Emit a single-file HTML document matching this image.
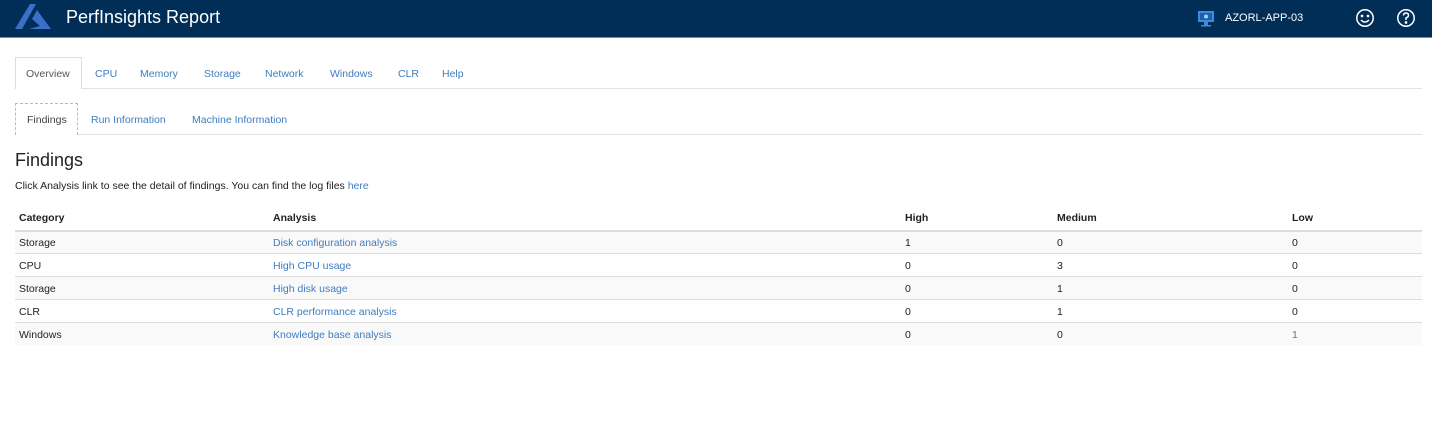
<!DOCTYPE html>
<html><head><style>
*{margin:0;padding:0;box-sizing:border-box}
body{width:1432px;height:432px;background:#fff;font-family:"Liberation Sans",sans-serif;font-size:10.5px;color:#222;position:relative;overflow:hidden}
.hdr{position:absolute;left:0;top:0;width:1432px;height:38px;background:#002e56;border-bottom:1px solid #7a8ea6}
.title{position:absolute;left:66px;top:7px;color:#fff;font-size:18px}
.a{position:absolute;color:#3f7dc0;white-space:nowrap}
.tab{position:absolute;height:32px;border:1px solid #ddd;border-bottom:none;background:#fff}
.line{position:absolute;left:15px;width:1407px;height:1px;background:#e2e2e2}
.row{position:absolute;left:15px;width:1407px;height:23px;border-top:1px solid #ddd}
.t{position:absolute;white-space:nowrap}
</style></head><body>
<div class="hdr">
<svg style="position:absolute;left:0;top:0" width="60" height="36" viewBox="0 0 60 36"><path d="M30 4 L36 4 L22 29 L15 29 Z" fill="#3b6fc9"/><path d="M37 10 L51 29 L29 29 L40 26 L32 19 Z" fill="#3b6fc9"/></svg>
<div class="title">PerfInsights Report</div>
<svg style="position:absolute;left:1197px;top:10px" width="18" height="17" viewBox="0 0 18 17"><rect x="1" y="1" width="16" height="11" fill="#3b8ce0"/><rect x="3" y="3" width="12" height="7" fill="#1d5fa8"/><circle cx="9" cy="6.5" r="2" fill="#9fd0ff"/><rect x="7" y="12" width="4" height="3" fill="#3b8ce0"/><rect x="4" y="15" width="10" height="1.5" fill="#3b8ce0"/></svg>
<div class="t" style="left:1225px;top:12px;color:#fff;font-size:11px">AZORL-APP-03</div>
<svg style="position:absolute;left:1355px;top:8px" width="20" height="20" viewBox="0 0 20 20" fill="none" stroke="#fff" stroke-width="1.5"><circle cx="10" cy="10" r="8.2"/><circle cx="7" cy="8" r=".6" fill="#fff"/><circle cx="13" cy="8" r=".6" fill="#fff"/><path d="M6 12 Q10 16 14 12"/></svg>
<svg style="position:absolute;left:1396px;top:8px" width="20" height="20" viewBox="0 0 20 20" fill="none" stroke="#fff" stroke-width="1.5"><circle cx="10" cy="10" r="8.2"/><path d="M7.5 7.5 Q7.5 5 10 5 Q12.5 5 12.5 7.3 Q12.5 9 10 10 L10 12"/><circle cx="10" cy="14.5" r=".6" fill="#fff"/></svg>
</div>
<div class="line" style="top:88px"></div>
<div class="tab" style="left:15px;top:57px;width:67px;height:32px"></div>
<div class="t" style="left:26px;top:68px;color:#555">Overview</div>
<div class="a" style="left:95px;top:68px">CPU</div>
<div class="a" style="left:140px;top:68px">Memory</div>
<div class="a" style="left:204px;top:68px">Storage</div>
<div class="a" style="left:265px;top:68px">Network</div>
<div class="a" style="left:330px;top:68px">Windows</div>
<div class="a" style="left:398px;top:68px">CLR</div>
<div class="a" style="left:442px;top:68px">Help</div>
<div class="line" style="top:134px"></div>
<div class="tab" style="left:15px;top:103px;width:63px;height:32px;border:1px dashed #bbb;border-bottom:none"></div>
<div class="t" style="left:27px;top:114px;color:#444">Findings</div>
<div class="a" style="left:91px;top:114px">Run Information</div>
<div class="a" style="left:192px;top:114px">Machine Information</div>
<div class="t" style="left:15px;top:150px;font-size:18px;color:#222">Findings</div>
<div class="t" style="left:15px;top:180px">Click Analysis link to see the detail of findings. You can find the log files <span style="color:#3f7dc0">here</span></div>
<div class="t" style="left:19px;top:212px;font-weight:bold">Category</div>
<div class="t" style="left:273px;top:212px;font-weight:bold">Analysis</div>
<div class="t" style="left:905px;top:212px;font-weight:bold">High</div>
<div class="t" style="left:1057px;top:212px;font-weight:bold">Medium</div>
<div class="t" style="left:1292px;top:212px;font-weight:bold">Low</div>
<div class="row" style="top:230px;background:#f9f9f9;border-top:2px solid #ddd"></div>
<div class="row" style="top:253px"></div>
<div class="row" style="top:276px;background:#f9f9f9"></div>
<div class="row" style="top:299px"></div>
<div class="row" style="top:322px;background:#f9f9f9"></div>
<div class="t" style="left:19px;top:237px">Storage</div><div class="a" style="left:273px;top:237px">Disk configuration analysis</div><div class="t" style="left:905px;top:237px">1</div><div class="t" style="left:1057px;top:237px">0</div><div class="t" style="left:1292px;top:237px">0</div>
<div class="t" style="left:19px;top:260px">CPU</div><div class="a" style="left:273px;top:260px">High CPU usage</div><div class="t" style="left:905px;top:260px">0</div><div class="t" style="left:1057px;top:260px">3</div><div class="t" style="left:1292px;top:260px">0</div>
<div class="t" style="left:19px;top:283px">Storage</div><div class="a" style="left:273px;top:283px">High disk usage</div><div class="t" style="left:905px;top:283px">0</div><div class="t" style="left:1057px;top:283px">1</div><div class="t" style="left:1292px;top:283px">0</div>
<div class="t" style="left:19px;top:306px">CLR</div><div class="a" style="left:273px;top:306px">CLR performance analysis</div><div class="t" style="left:905px;top:306px">0</div><div class="t" style="left:1057px;top:306px">1</div><div class="t" style="left:1292px;top:306px">0</div>
<div class="t" style="left:19px;top:329px">Windows</div><div class="a" style="left:273px;top:329px">Knowledge base analysis</div><div class="t" style="left:905px;top:329px">0</div><div class="t" style="left:1057px;top:329px">0</div><div class="a" style="left:1292px;top:329px">1</div>
</body></html>
